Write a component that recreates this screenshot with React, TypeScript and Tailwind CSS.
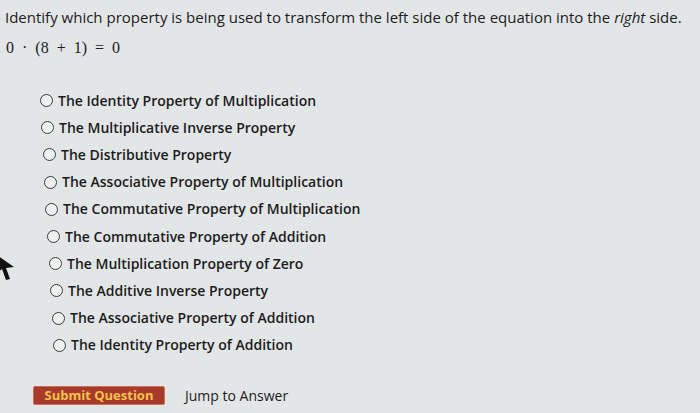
import React from 'react';

const options = [
  'The Identity Property of Multiplication',
  'The Multiplicative Inverse Property',
  'The Distributive Property',
  'The Associative Property of Multiplication',
  'The Commutative Property of Multiplication',
  'The Commutative Property of Addition',
  'The Multiplication Property of Zero',
  'The Additive Inverse Property',
  'The Associative Property of Addition',
  'The Identity Property of Addition',
];

// photo is slightly skewed, each row sits a bit further right
const indents = ['ml-[40px]', 'ml-[41px]', 'ml-[43px]', 'ml-[44px]', 'ml-[45px]', 'ml-[47px]', 'ml-[49px]', 'ml-[50px]', 'ml-[52px]', 'ml-[53px]'];

export default function App() {
  return (
    <div className="relative w-[700px] h-[413px] overflow-hidden bg-[#e3e6e7] text-[#1c1c1c] font-['Open_Sans',sans-serif]">
      <div className="pl-[5px] pt-[6px] text-[15px] font-medium leading-[22px] whitespace-nowrap">
        Identify which property is being used to transform the left side of the equation into the <i>right</i> side.
      </div>
      <div className="pl-[6px] mt-[9px] text-[16px] leading-[22px] font-['Liberation_Serif',serif] [word-spacing:4px]">
        0 · (8 + 1) = 0
      </div>

      <div className="mt-[28px] flex flex-col">
        {options.map((opt, i) => (
          <label key={opt} className={`flex items-center gap-[5px] h-[27.2px] ${indents[i]}`}>
            <span className="w-[13px] h-[13px] rounded-full border-[1.5px] border-[#3a3a3a] bg-[#eef0f0]" />
            <span className="text-[14px] font-semibold leading-none whitespace-nowrap">{opt}</span>
          </label>
        ))}
      </div>

      <div className="mt-[26px] ml-[33px] flex items-center gap-[20px]">
        <button className="h-[19px] w-[132px] bg-[#a83a2c] border border-[#c8705a] rounded-[2px] text-[#f3c34e] text-[13px] font-bold leading-none">
          Submit Question
        </button>
        <span className="text-[14px] font-medium">Jump to Answer</span>
      </div>

      <svg className="absolute left-0 top-[253px]" width="18" height="28" viewBox="0 0 18 28">
        <path d="M-6 0 L14 14 L6 15 L10 26 L6 27 L2 16 L-6 22 Z" fill="#111" />
      </svg>
    </div>
  );
}
